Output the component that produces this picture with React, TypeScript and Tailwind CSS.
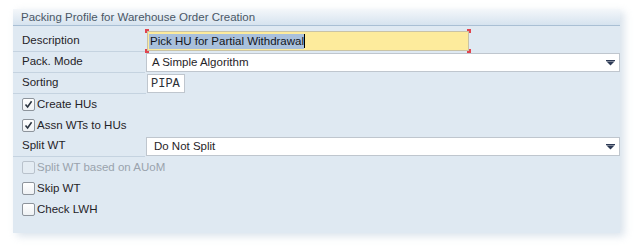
import React from "react";

const font = { fontFamily: '"Liberation Sans", Arial, sans-serif' };

function Check({ checked, disabled }: { checked?: boolean; disabled?: boolean }) {
  return (
    <span
      className={`w-[13px] h-[13px] rounded-[2px] border flex items-center justify-center ${
        disabled ? "border-[#b9c2cc] bg-[#e4ecf3]" : "border-[#8d949c] bg-gradient-to-b from-white to-[#eef1f4]"
      }`}
    >
      {checked && (
        <svg width="9" height="9" viewBox="0 0 9 9">
          <path d="M1.5 4.5 L3.6 7 L7.6 1.2" fill="none" stroke="#2b3440" strokeWidth="1.6" />
        </svg>
      )}
    </span>
  );
}

function CheckRow({ label, checked, disabled }: { label: string; checked?: boolean; disabled?: boolean }) {
  return (
    <div className="h-[21px] flex items-center pl-[9px] gap-[2px]">
      <Check checked={checked} disabled={disabled} />
      <span className={disabled ? "text-[#9aa3ad]" : "text-[#1f2328]"}>{label}</span>
    </div>
  );
}

function Label({ text }: { text: string }) {
  return (
    <div className="w-[133px] h-full flex items-center pl-[9px] border-b border-[#c5d3e0] text-[#1f2328]">
      {text}
    </div>
  );
}

function Arrow() {
  return (
    <svg width="9" height="6" viewBox="0 0 9 6" className="mr-[4px]">
      <rect x="0" y="0" width="9" height="1.2" fill="#2d3a55" />
      <path d="M0.5 1.5 H8.5 L4.5 5.5 Z" fill="#2d3a55" />
    </svg>
  );
}

function Bracket({ className }: { className: string }) {
  return <span className={`absolute w-[4px] h-[4px] border-[#e0454f] ${className}`} />;
}

export default function App() {
  return (
    <div className="w-[640px] h-[246px] bg-white text-[11.5px] relative" style={font}>
      <div className="absolute left-[13px] top-[9px] w-[607px] h-[224px] bg-[#dfe9f2] shadow-[4px_3px_8px_rgba(170,190,210,0.45)]">
        <div className="h-[17px] flex items-center pl-[8px] pt-[1px] bg-gradient-to-b from-[#f4f7fa] to-[#d6e3ef] border-b border-[#a9bfd4] text-[#4a5766]">
          Packing Profile for Warehouse Order Creation
        </div>

        <div className="pt-[4px]">
          {/* Description */}
          <div className="h-[22px] flex items-center">
            <Label text="Description" />
            <div className="relative ml-[1px] w-[322px] h-[20px]">
              <div className="w-full h-full bg-[#fdeb9c] border border-[#c9c3a6] flex items-center pl-[1px]">
                <span className="bg-[#a9c0dc] text-[#12161c] leading-[15px] pl-[1px]">
                  Pick HU for Partial Withdrawal
                </span>
                <span className="w-[1px] h-[14px] bg-black" />
              </div>
              <Bracket className="-left-[2px] -top-[2px] border-l-2 border-t-2" />
              <Bracket className="-left-[2px] -bottom-[2px] border-l-2 border-b-2" />
              <Bracket className="-right-[2px] -top-[2px] border-r-2 border-t-2" />
              <Bracket className="-right-[2px] -bottom-[2px] border-r-2 border-b-2" />
            </div>
          </div>

          {/* Pack. Mode */}
          <div className="h-[21px] flex items-center">
            <Label text="Pack. Mode" />
            <div className="ml-[1px] w-[478px] h-[19px] bg-white border border-[#bfc6ce] flex items-center justify-between pl-[5px] text-[#1f2328]">
              <span>A Simple Algorithm</span>
              <Arrow />
            </div>
          </div>

          {/* Sorting */}
          <div className="h-[21px] flex items-center">
            <Label text="Sorting" />
            <div
              className="ml-[1px] w-[38px] h-[19px] bg-white border border-[#bfc6ce] flex items-center pl-[3px] text-[12px] text-[#2a2f36]"
              style={{ fontFamily: '"Liberation Mono", "Courier New", monospace' }}
            >
              PIPA
            </div>
          </div>

          <CheckRow label="Create HUs" checked />
          <CheckRow label="Assn WTs to HUs" checked />

          {/* Split WT */}
          <div className="h-[21px] flex items-center">
            <Label text="Split WT" />
            <div className="ml-[1px] w-[478px] h-[19px] bg-white border border-[#bfc6ce] flex items-center justify-between pl-[7px] text-[#1f2328]">
              <span>Do Not Split</span>
              <Arrow />
            </div>
          </div>

          <CheckRow label="Split WT based on AUoM" disabled />
          <CheckRow label="Skip WT" />
          <CheckRow label="Check LWH" />
        </div>
      </div>
    </div>
  );
}
